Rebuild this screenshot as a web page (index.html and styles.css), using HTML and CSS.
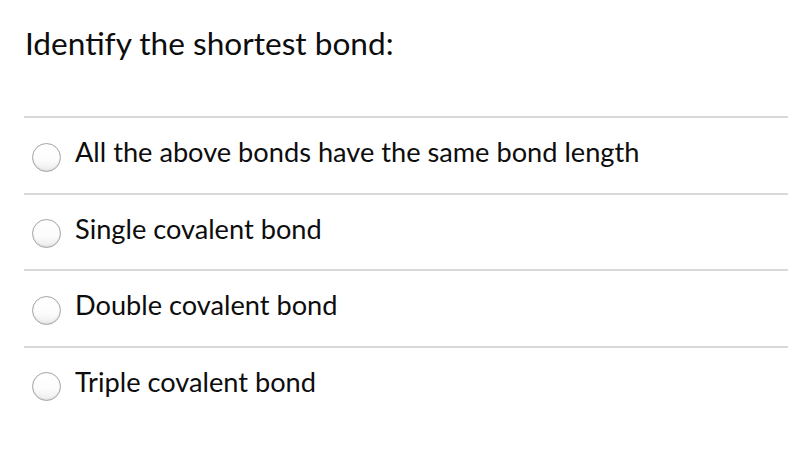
FILE: index.html
```html
<!DOCTYPE html>
<html>
<head>
<meta charset="utf-8">
<link rel="stylesheet" href="styles.css">
</head>
<body>
<div class="question">
  <h1 class="title">Identify the shortest bond:</h1>
  <ul class="options">
    <li class="option"><span class="radio"></span><span class="label">All the above bonds have the same bond length</span></li>
    <li class="option"><span class="radio"></span><span class="label">Single covalent bond</span></li>
    <li class="option"><span class="radio"></span><span class="label">Double covalent bond</span></li>
    <li class="option"><span class="radio"></span><span class="label">Triple covalent bond</span></li>
  </ul>
</div>
</body>
</html>
```
FILE: styles.css
```css
html, body {
  margin: 0;
  padding: 0;
  background: #fff;
}
body {
  font-family: Lato, "Liberation Sans", sans-serif;
  color: #0d0d0d;
  width: 788px;
  height: 454px;
  overflow: hidden;
}
.question {
  padding-left: 24px;
}
.title {
  margin: 0;
  padding-top: 23px;
  height: 116px;
  box-sizing: border-box;
  font-size: 31.6px;
  font-weight: 400;
  line-height: 40px;
  padding-left: 1px;
}
.options {
  list-style: none;
  margin: 0;
  padding: 0;
}
.option {
  border-top: 2px solid #d9d9d9;
  height: 74.5px;
  display: flex;
  align-items: center;
  padding-left: 8px;
}
.radio {
  width: 27px;
  height: 27px;
  border-radius: 50%;
  border: 1px solid #a3a3a3;
  background: linear-gradient(#ffffff 0%, #fcfcfc 60%, #ececec 100%);
  box-shadow: inset 0 -1px 2px rgba(0,0,0,0.08);
  flex: none;
  margin-top: 4px;
}
.label {
  margin-left: 14px;
  font-size: 27.2px;
  line-height: 32px;
  margin-bottom: 6px;
}
```
